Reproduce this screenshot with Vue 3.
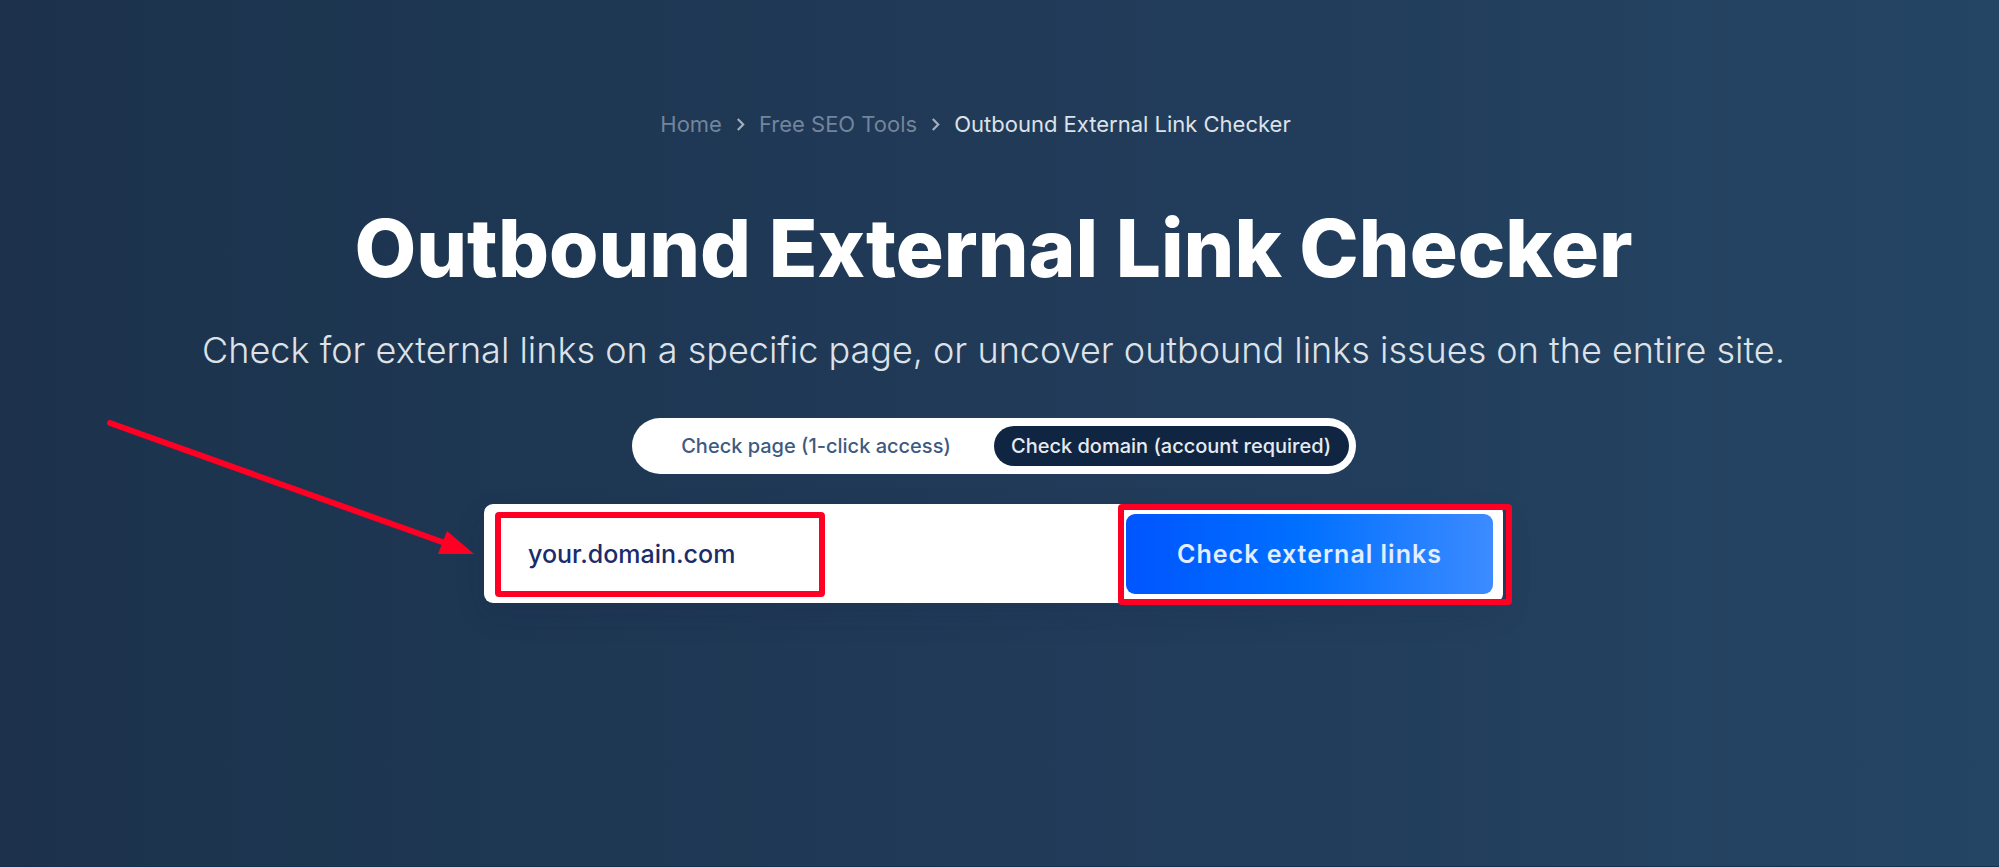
<script setup>
import { ref } from 'vue'

// breadcrumb items, the last one is the current page
const crumbs = ref([
  { text: 'Home', href: '#' },
  { text: 'Free SEO Tools', href: '#' },
])
const title = 'Outbound External Link Checker'

const modes = [
  { value: 'page', text: 'Check page (1-click access)' },
  { value: 'domain', text: 'Check domain (account required)' },
]
const mode = ref('domain')
const url = ref('your.domain.com')

function check() {
  url.value = url.value.trim()
}
</script>

<template>
  <main class="hero">
    <nav class="crumbs">
      <template v-for="item in crumbs" :key="item.text">
        <a class="crumb" :href="item.href">{{ item.text }}</a>
        <svg class="chevron" viewBox="0 0 8 12" aria-hidden="true">
          <path d="M1.5 1 L6.5 6 L1.5 11" />
        </svg>
      </template>
      <span class="current">{{ title }}</span>
    </nav>

    <h1 class="title">{{ title }}</h1>
    <p class="subtitle">
      Check for external links on a specific page, or uncover outbound links issues on the entire site.
    </p>

    <div class="switch">
      <label
        v-for="item in modes"
        :key="item.value"
        :class="['option', { active: mode === item.value }]"
      >
        <input v-model="mode" class="radio" type="radio" name="mode" :value="item.value" />
        {{ item.text }}
      </label>
    </div>

    <form class="search" @submit.prevent="check">
      <input v-model="url" class="search-input" type="text" aria-label="Domain" />
      <button class="search-button" type="submit">Check external links</button>

      <!-- red marks over the form -->
      <span class="mark mark-input"></span>
      <span class="mark mark-button"></span>
      <svg class="arrow" viewBox="0 0 374 140" aria-hidden="true">
        <line x1="5" y1="5" x2="340" y2="125" />
        <path d="M369 136 L342 113 L333 136 Z" />
      </svg>
    </form>
  </main>
</template>

<style>
body {
  margin: 0;
}
</style>

<style scoped>
.hero {
  box-sizing: border-box;
  display: flex;
  flex-direction: column;
  align-items: center;
  min-height: 100vh;
  padding: 108px 12px 40px 0;
  border-bottom: 1px solid #16304f;
  background: linear-gradient(90deg, #1d304c 0%, #1c344e 8%, #1e3753 30%, #223c5b 62%, #254564 100%);
  font-family: Inter, "Liberation Sans", sans-serif;
  color: #fff;
}

.crumbs {
  display: flex;
  align-items: center;
  gap: 14px;
  padding-right: 36px;
  font-size: 22px;
  line-height: 32px;
}

.crumb {
  color: #73859c;
  text-decoration: none;
}

.current {
  color: #dde2e8;
}

.chevron {
  width: 9px;
  height: 13px;
  fill: none;
  stroke: #a3b0bf;
  stroke-width: 2;
}

.title {
  margin: 64px 0 0;
  font-size: 80px;
  font-weight: 800;
  line-height: 88px;
  text-align: center;
}

.subtitle {
  margin: 36px 0 0;
  font-size: 36px;
  font-weight: 300;
  line-height: 44px;
  text-align: center;
  color: #dde2e8;
}

.switch {
  box-sizing: border-box;
  display: flex;
  width: 100%;
  max-width: 724px;
  margin-top: 46px;
  padding: 8px 7px;
  border-radius: 28px;
  background: #fff;
}

.option {
  flex: 1;
  border-radius: 20px;
  font-size: 20px;
  font-weight: 500;
  line-height: 40px;
  text-align: center;
  color: #3f5a80;
  cursor: pointer;
}

.option.active {
  background: #102542;
  color: #e6ebf0;
}

.radio {
  position: absolute;
  margin: 0;
  opacity: 0;
}

.search {
  box-sizing: border-box;
  position: relative;
  display: flex;
  width: 100%;
  max-width: 1019px;
  margin-top: 30px;
  padding: 10px 10px 9px;
  border-radius: 9px;
  background: #fff;
  box-shadow: 0 12px 30px rgba(16, 37, 66, 0.12);
}

.search-input {
  flex: 1;
  min-width: 0;
  padding: 0 34px;
  border: 0;
  outline: none;
  background: transparent;
  font-family: inherit;
  font-size: 25px;
  font-weight: 500;
  color: #1a2c6b;
}

.search-button {
  width: 367px;
  height: 80px;
  border: 0;
  border-radius: 9px;
  background: linear-gradient(90deg, #0055ff 0%, #0070ff 48%, #3d8bff 100%);
  font-family: inherit;
  font-size: 25px;
  font-weight: 600;
  letter-spacing: 1px;
  color: #e3eeff;
  cursor: pointer;
}

.mark {
  box-sizing: border-box;
  position: absolute;
  border: 6px solid #ff0024;
  border-radius: 4px;
  pointer-events: none;
}

.mark-input {
  top: 8px;
  left: 11px;
  width: 330px;
  height: 85px;
}

.mark-button {
  top: 0;
  right: -9px;
  width: 394px;
  height: 101px;
}

.arrow {
  position: absolute;
  top: -86px;
  right: 100%;
  width: 374px;
  height: 140px;
  margin-right: 5px;
  pointer-events: none;
}

.arrow line {
  stroke: #ff0024;
  stroke-width: 6;
  stroke-linecap: round;
}

.arrow path {
  fill: #ff0024;
}
</style>
